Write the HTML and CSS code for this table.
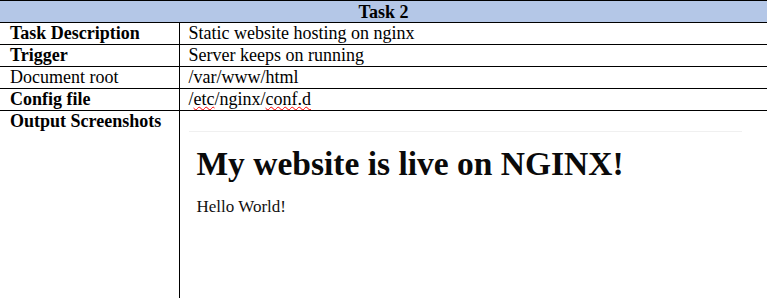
FILE: index.html
```html
<!DOCTYPE html>
<html>
<head>
<meta charset="utf-8">
<link rel="stylesheet" href="styles.css">
</head>
<body>
<table class="task">
  <colgroup><col class="c1"><col class="c2"></colgroup>
  <tr class="head"><th colspan="2">Task 2</th></tr>
  <tr><td class="label bold">Task Description</td><td class="val">Static website hosting on nginx</td></tr>
  <tr><td class="label bold">Trigger</td><td class="val">Server keeps on running</td></tr>
  <tr><td class="label">Document root</td><td class="val">/var/www/html</td></tr>
  <tr><td class="label bold">Config file</td><td class="val">/<span class="spell">etc</span>/nginx/<span class="spell">conf.d</span></td></tr>
  <tr class="shot-row">
    <td class="label bold">Output Screenshots</td>
    <td class="val shot-cell">
      <div class="shot">
        <div class="shot-line"></div>
        <h1 class="shot-title">My website is live on NGINX!</h1>
        <p class="shot-text">Hello World!</p>
      </div>
    </td>
  </tr>
</table>
</body>
</html>
```
FILE: styles.css
```css
html, body {
  margin: 0;
  padding: 0;
  background: #fff;
}
body {
  font-family: "Liberation Serif", "Times New Roman", serif;
  font-size: 18px;
  color: #000;
  width: 767px;
  height: 298px;
  overflow: hidden;
}
.task {
  width: 767px;
  border-collapse: collapse;
  table-layout: fixed;
  font-family: "Liberation Serif", "Times New Roman", serif;
  font-size: 18px;
}
.c1 { width: 179px; }
.c2 { width: 588px; }
.task th, .task td {
  border-top: 1px solid #000;
  border-bottom: 1px solid #000;
  height: 21px;
  padding: 0;
  line-height: 20px;
  vertical-align: top;
  overflow: hidden;
  white-space: nowrap;
}
.head th {
  background: #b4c7e7;
  font-weight: bold;
  text-align: center;
  padding-top: 1px;
  height: 20px;
}
.label {
  padding-left: 10px !important;
  border-right: 1px solid #000;
}
.val {
  padding-left: 9px !important;
}
.bold { font-weight: bold; }
.spell {
  text-decoration-line: underline;
  text-decoration-style: wavy;
  text-decoration-color: #ff0000;
  text-decoration-thickness: 1px;
  text-underline-offset: 1px;
}
.shot-row td {
  height: 200px;
  border-bottom: none;
}
.shot {
  margin-top: 20px;
  width: 545px;
  padding-left: 8px;
  box-sizing: content-box;
}
.shot-line {
  height: 1px;
  background: #f0f0f0;
  margin-left: -8px;
  width: 553px;
}
.shot-title {
  margin: 13px 0 0 0;
  font-size: 33.5px;
  line-height: 38px;
  font-weight: bold;
  color: #0a0a0a;
}
.shot-text {
  margin: 14px 0 0 0;
  font-size: 17px;
  line-height: 20px;
  color: #111;
}
```
